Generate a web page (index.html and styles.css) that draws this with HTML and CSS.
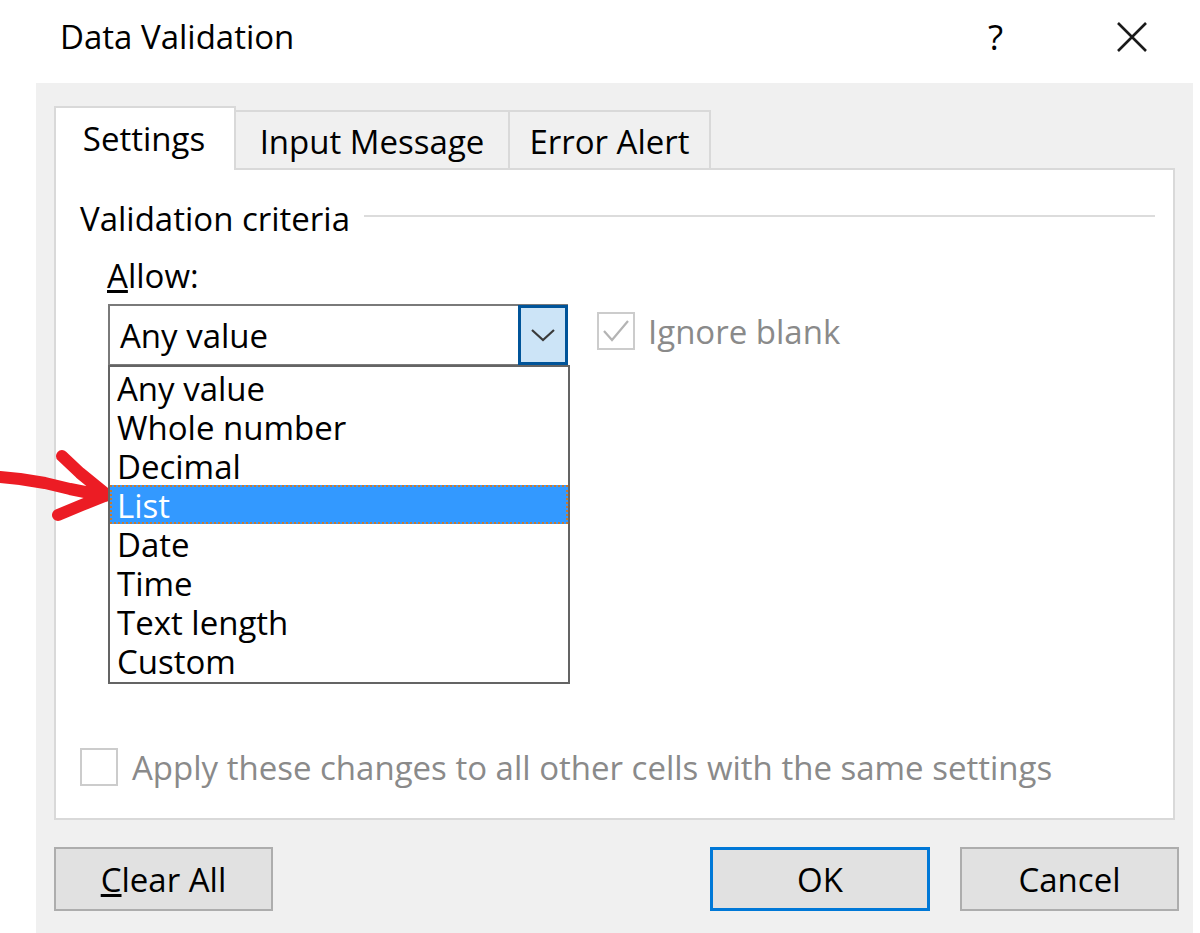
FILE: index.html
```html
<!DOCTYPE html>
<html>
<head>
<meta charset="utf-8">
<link rel="stylesheet" href="styles.css">
</head>
<body>
<div class="titlebar">
  <div class="title">Data Validation</div>
  <div class="help">?</div>
  <svg class="close" width="32" height="32" viewBox="0 0 32 32"><path d="M2 2 L30 30 M30 2 L2 30" stroke="#1a1a1a" stroke-width="2.6" fill="none"/></svg>
</div>
<div class="dialog">
  <div class="tabs">
    <div class="tab active">Settings</div>
    <div class="tab t-input">Input Message</div>
    <div class="tab t-error">Error Alert</div>
  </div>
  <div class="panel">
    <div class="group-head"><span class="group-label">Validation criteria</span><span class="group-line"></span></div>
    <div class="allow-label"><u>A</u>llow:</div>
    <div class="allow-row">
      <div class="combo">
        <div class="combo-box">
          <span class="combo-text">Any value</span>
          <span class="combo-btn"><svg width="26" height="14" viewBox="0 0 26 14"><path d="M2 2 L13 12 L24 2" stroke="#3a3a3a" stroke-width="2.2" fill="none"/></svg></span>
        </div>
        <div class="listbox">
          <div class="item">Any value</div>
          <div class="item">Whole number</div>
          <div class="item">Decimal</div>
          <div class="item selected">List</div>
          <div class="item">Date</div>
          <div class="item">Time</div>
          <div class="item">Text length</div>
          <div class="item">Custom</div>
        </div>
      </div>
      <div class="check-row ignore">
        <span class="checkbox"><svg width="34" height="34" viewBox="0 0 34 34"><path d="M5 17 L13 26 L29 7" stroke="#b4b4b4" stroke-width="2.2" fill="none"/></svg></span>
        <span class="disabled-text">Ignore blank</span>
      </div>
    </div>
    <div class="check-row apply">
      <span class="checkbox"></span>
      <span class="disabled-text">Apply these changes to all other cells with the same settings</span>
    </div>
  </div>
  <div class="buttons">
    <div class="btn"><u>C</u>lear All</div>
    <div class="spacer"></div>
    <div class="btn default">OK</div>
    <div class="btn">Cancel</div>
  </div>
</div>
<svg class="arrow" width="120" height="80" viewBox="0 0 120 80"><path d="M0 32 L20 34 L45 38 L70 44 L105 51 M62 11 L80 28 L107 50 L82 60 L58 70" stroke="#ec1c24" stroke-width="12" stroke-linejoin="round" stroke-linecap="round" fill="none"/></svg>
</body>
</html>
```
FILE: styles.css
```css
* { box-sizing: border-box; }
html, body { margin: 0; padding: 0; }
body {
  width: 1200px;
  height: 933px;
  overflow: hidden;
  background: #ffffff;
  font-family: "Open Sans", "Noto Sans", sans-serif;
  font-size: 33px;
  color: #000;
  position: relative;
}
.titlebar {
  height: 83px;
  display: flex;
  align-items: center;
  padding: 0 52px 10px 60px;
}
.title { flex: 1; font-size: 33px; }
.help { font-size: 35px; margin-right: 113px; }
.close { display: block; }
.dialog {
  margin-left: 36px;
  width: 1157px;
  height: 850px;
  background: #f0f0f0;
  padding: 23px 18px 0 18px;
  display: flex;
  flex-direction: column;
}
.tabs {
  display: flex;
  align-items: flex-end;
  height: 62px;
  position: relative;
  z-index: 1;
}
.tab {
  height: 58px;
  border: 2px solid #d9d9d9;
  border-bottom: none;
  border-left: none;
  background: #f0f0f0;
  display: flex;
  align-items: center;
  justify-content: center;
  padding-top: 3px;
}
.t-input { width: 274px; }
.t-error { width: 201px; }
.tab.active {
  width: 182px;
  height: 64px;
  margin-bottom: -2px;
  background: #fff;
  border-left: 2px solid #d9d9d9;
  padding: 0 2px 2px 0;
}
.panel {
  height: 652px;
  background: #fff;
  border: 2px solid #d9d9d9;
  display: flex;
  flex-direction: column;
  padding: 26px 18px 28px 24px;
}
.group-head {
  display: flex;
  align-items: center;
  height: 44px;
}
.group-line {
  flex: 1;
  height: 2px;
  background: #dcdcdc;
  margin-left: 14px;
  margin-top: -4px;
}
.allow-label {
  margin: 14px 0 0 27px;
  height: 44px;
  line-height: 44px;
}
.allow-row {
  display: flex;
  align-items: flex-start;
  margin: 6px 0 0 28px;
}
.combo {
  position: relative;
  width: 460px;
  z-index: 2;
}
.combo-box {
  height: 62px;
  border: 2px solid #7a7a7a;
  background: #fff;
  display: flex;
  align-items: center;
}
.combo-text { flex: 1; padding-left: 10px; padding-top: 1px; }
.combo-btn {
  width: 50px;
  height: 60px;
  margin: -1px -2px -1px 0;
  background: #cce4f7;
  border: 3px solid #005499;
  display: flex;
  align-items: center;
  justify-content: center;
}
.combo-btn svg { display: block; }
.listbox {
  position: absolute;
  left: 0;
  top: 61px;
  width: 462px;
  background: #fff;
  border: 2px solid #646464;
  padding: 1px 0 2px 0;
}
.item {
  height: 39px;
  line-height: 37px;
  padding-left: 5px;
  border: 2px solid transparent;
  white-space: nowrap;
}
.item.selected {
  background: #3399ff;
  color: #fff;
  border: 2px dotted #c87a30;
}
.check-row {
  display: flex;
  align-items: center;
}
.ignore { margin: 3px 0 0 29px; }
.checkbox {
  width: 38px;
  height: 38px;
  border: 2px solid #cccccc;
  background: #fff;
  display: flex;
  align-items: center;
  justify-content: center;
  flex: none;
}
.checkbox svg { display: block; }
.disabled-text { color: #8a8a8a; margin-left: 13px; padding-top: 2px; white-space: nowrap; }
.apply { margin-top: auto; }
.apply .disabled-text { margin-left: 14px; }
.buttons {
  display: flex;
  margin-top: 27px;
  gap: 30px;
  margin-right: -4px;
}
.spacer { flex: 1; }
.btn {
  width: 219px;
  height: 64px;
  background: #e1e1e1;
  border: 2px solid #adadad;
  display: flex;
  align-items: center;
  justify-content: center;
  padding-top: 1px;
}
.btn.default { border: 3px solid #0078d7; width: 220px; }
.arrow {
  position: absolute;
  left: 0;
  top: 445px;
}
```
